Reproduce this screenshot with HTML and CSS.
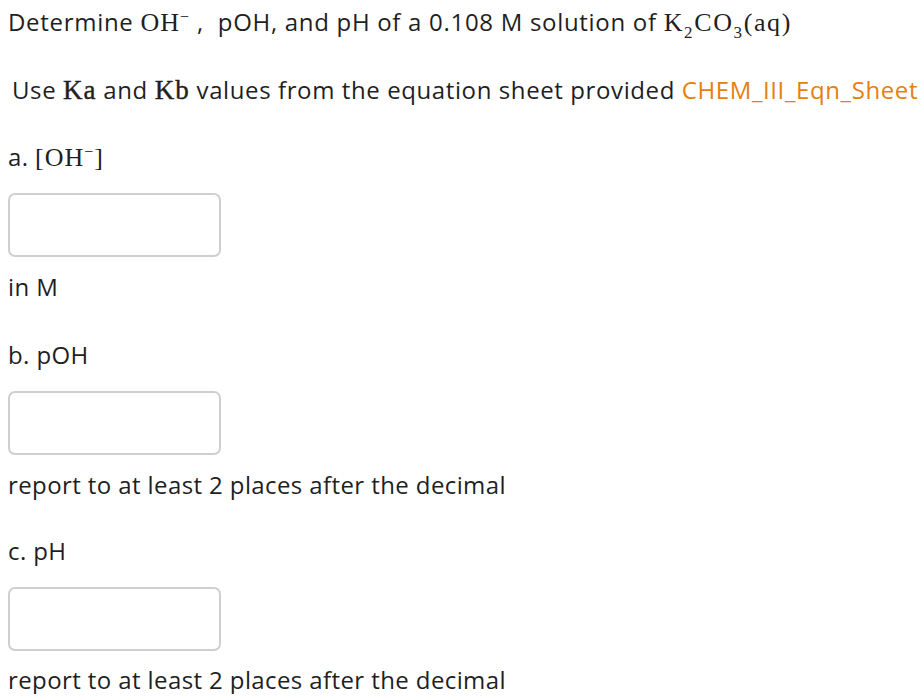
FILE: index.html
```html
<!DOCTYPE html>
<html>
<head>
<meta charset="utf-8">
<link rel="stylesheet" href="styles.css">
</head>
<body>
<div class="page">
  <p class="line title">Determine <span class="m">OH<sup>−</sup></span> ,&nbsp; pOH, and pH of a 0.108 M solution of <span class="m wide">K<sub>2</sub>CO<sub>3</sub>(aq)</span></p>
  <p class="line intro">Use <span class="m k">Ka</span> and <span class="m k">Kb</span> values from the equation sheet provided <a class="link">CHEM_III_Eqn_Sheet</a></p>

  <section class="part first">
    <p class="line label">a. <span class="m">[OH<sup>−</sup>]</span></p>
    <div class="box"></div>
    <p class="line note">in M</p>
  </section>

  <section class="part">
    <p class="line label">b. pOH</p>
    <div class="box"></div>
    <p class="line note">report to at least 2 places after the decimal</p>
  </section>

  <section class="part third">
    <p class="line label">c. pH</p>
    <div class="box"></div>
    <p class="line note last">report to at least 2 places after the decimal</p>
  </section>
</div>
</body>
</html>
```
FILE: styles.css
```css
html, body {
  margin: 0;
  padding: 0;
  background: #ffffff;
}
.page {
  padding: 8px 0 0 8px;
  font-family: "Open Sans", Lato, sans-serif;
  font-size: 24px;
  letter-spacing: 0.4px;
  font-weight: 500;
  color: #1f1f1f;
}
.line {
  margin: 0;
  height: 28px;
  line-height: 28px;
  white-space: nowrap;
}
.title {
  letter-spacing: 0.7px;
}
.intro {
  margin-top: 40px;
  padding-left: 4px;
  letter-spacing: 0.6px;
}
.m {
  font-family: "Liberation Serif", "DejaVu Serif", serif;
  font-size: 26px;
  font-weight: 400;
  letter-spacing: 1px;
  line-height: 1;
}
.m.wide {
  letter-spacing: 1.6px;
}
.m.k {
  font-size: 27px;
  letter-spacing: 1px;
  -webkit-text-stroke: 0.4px #1f1f1f;
}
.m sup {
  font-size: 16px;
  vertical-align: 9px;
  line-height: 0;
}
.m sub {
  font-size: 17px;
  vertical-align: -7px;
  line-height: 0;
}
.link {
  color: #e5800f;
  text-decoration: none;
}
.part {
  margin-top: 40px;
}
.part.first {
  margin-top: 39px;
}
.part.third {
  margin-top: 38px;
}
.box {
  margin-top: 22px;
  width: 209px;
  height: 60px;
  border: 2px solid #cfcfcf;
  border-radius: 7px;
  background: #fff;
}
.note {
  margin-top: 16px;
}
.note.last {
  margin-top: 15px;
}
```
